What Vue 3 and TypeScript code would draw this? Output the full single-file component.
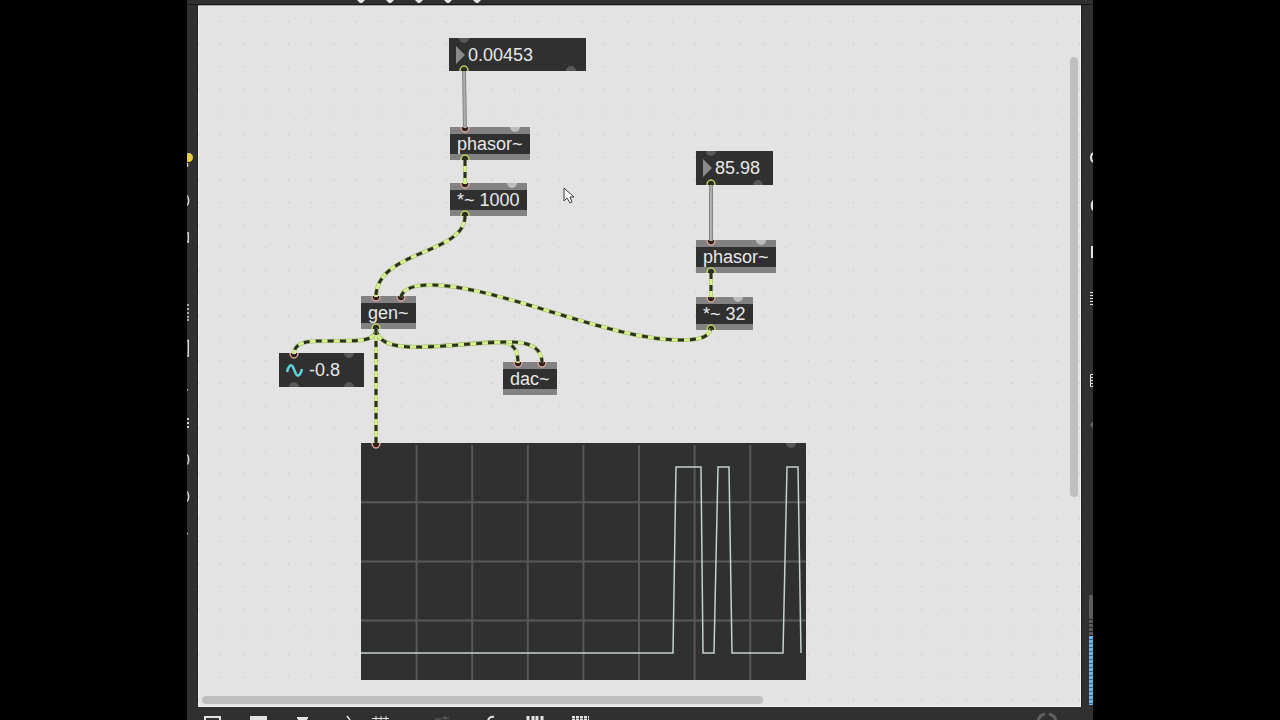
<script setup lang="ts">
import { reactive } from 'vue'

type Kind = 'number' | 'signal' | 'object' | 'scope'

interface Port {
  at: number
  live: boolean
}

interface PatchNode {
  id: string
  kind: Kind
  text: string
  x: number
  y: number
  w: number
  h: number
  inlets: Port[]
  outlets: Port[]
}

const live = (at: number): Port => ({ at, live: true })
const idle = (at: number): Port => ({ at, live: false })

const nodes = reactive<PatchNode[]>([
  { id: 'rate', kind: 'number', text: '0.00453', x: 251, y: 33, w: 137, h: 33, inlets: [idle(15)], outlets: [live(15), idle(122)] },
  { id: 'phasor-a', kind: 'object', text: 'phasor~', x: 252, y: 122, w: 80, h: 33, inlets: [live(15), idle(65)], outlets: [live(15)] },
  { id: 'mul-a', kind: 'object', text: '*~ 1000', x: 252, y: 178, w: 77, h: 33, inlets: [live(15), idle(62)], outlets: [live(15)] },
  { id: 'freq', kind: 'number', text: '85.98', x: 498, y: 146, w: 77, h: 34, inlets: [idle(15)], outlets: [live(15), idle(62)] },
  { id: 'phasor-b', kind: 'object', text: 'phasor~', x: 498, y: 235, w: 80, h: 33, inlets: [live(15), idle(65)], outlets: [live(15)] },
  { id: 'mul-b', kind: 'object', text: '*~ 32', x: 498, y: 292, w: 57, h: 33, inlets: [live(15), idle(42)], outlets: [live(15)] },
  { id: 'gen', kind: 'object', text: 'gen~', x: 163, y: 291, w: 55, h: 33, inlets: [live(15), live(40)], outlets: [live(15)] },
  { id: 'level', kind: 'signal', text: '-0.8', x: 81, y: 348, w: 85, h: 34, inlets: [live(15), idle(70)], outlets: [idle(15), idle(70)] },
  { id: 'dac', kind: 'object', text: 'dac~', x: 305, y: 357, w: 54, h: 33, inlets: [live(15), live(39)], outlets: [] },
  { id: 'scope', kind: 'scope', text: '', x: 163, y: 438, w: 445, h: 237, inlets: [live(15), idle(430)], outlets: [] },
])

const controlCords = ['M266 66 L267 123', 'M513 180 L513 236']

const signalCords = [
  'M267 155 V179',
  'M513 268 V293',
  'M267 211 C267 250 178 245 178 292',
  'M203 292 C205 283 218 280 232 280 C300 280 410 335 482 335 C500 335 510 333 513 324',
  'M178 324 C178 336 162 336 140 336 C118 336 96 334 96 349',
  'M178 324 C180 339 198 342 218 342 C250 342 280 337 300 337 C314 337 320 343 320 358',
  'M178 324 C180 339 198 342 218 342 C250 342 285 337 312 337 C332 337 344 343 344 358',
  'M178 324 V438',
]

const trace =
  '0,210 312,210 315,24 340,24 342,210 353,210 357,24 368,24 371,210 422,210 426,24 437,24 440,210'

const leftTools = ['record', 'round', 'square', '', 'list', 'panel', 'dot', 'rows', 'round', 'round', 'tick']
const rightTools = ['ring', 'disc', 'block', 'list', 'grid', 'arrow']
const bottomTools = ['window', 'solid', 'tab', 'paren', 'hash', 'dim', 'curve', 'bars', 'dots']
</script>

<template>
  <div class="screen">
    <main class="app">
      <nav class="top" aria-label="Toolbar">
        <button v-for="n in 5" :key="n" type="button" :aria-label="`Menu ${n}`">
          <svg width="29" height="5"><path d="M11 0 H19 L16 3 H14 Z" fill="#e8e8e8" /></svg>
        </button>
      </nav>

      <nav class="left" aria-label="Objects">
        <template v-for="(tool, i) in leftTools" :key="i">
          <span v-if="!tool" class="space"></span>
          <button v-else type="button" :aria-label="tool">
            <svg width="11" height="37" fill="none" stroke="#d2d2d2" stroke-width="1.5">
              <template v-if="tool === 'record'">
                <circle cx="1.5" cy="12.5" r="4.5" fill="#e6d22e" stroke="none" />
                <path d="M.5 18 V22" />
              </template>
              <path v-else-if="tool === 'round'" d="M-1 13.5 C2.5 14 2.5 23 -1 23.5" />
              <path v-else-if="tool === 'square'" d="M-1 14 H1.3 V23 H-1" />
              <path v-else-if="tool === 'panel'" d="M-1 10.5 H1.3 V26 H-1" />
              <path v-else-if="tool === 'list'" d="M0 12 H2 M0 16 H2 M0 20 H2 M0 24 H2 M0 27 H2" />
              <circle v-else-if="tool === 'dot'" cx="0" cy="23" r="1" fill="#d2d2d2" stroke="none" />
              <path v-else-if="tool === 'rows'" d="M0 15 H2 M0 19 H2 M0 23 H2" stroke-width="2" />
              <path v-else d="M0 18.5 H1" />
            </svg>
          </button>
        </template>
      </nav>

      <section class="canvas" aria-label="Patcher">
        <svg class="layer" aria-hidden="true">
          <defs>
            <pattern id="dots" x="11.4" y="5.4" width="22.6" height="22.6" patternUnits="userSpaceOnUse">
              <circle cx="11.3" cy="11.3" r=".8" fill="#c6c6c6" />
            </pattern>
          </defs>
          <rect width="100%" height="100%" fill="url(#dots)" />
        </svg>

        <div
          v-for="node in nodes"
          :key="node.id"
          class="node"
          :class="node.kind"
          :style="{ left: node.x + 'px', top: node.y + 'px', width: node.w + 'px', height: node.h + 'px' }"
        >
          <template v-if="node.kind === 'number'">
            <svg class="mark" width="9" height="18"><path d="M0 0 L9 9 L0 18 Z" fill="#8a8a8a" /></svg>
            <input v-model="node.text" type="text" :aria-label="node.id" />
          </template>
          <template v-else-if="node.kind === 'signal'">
            <svg class="mark" width="17" height="16" fill="none" stroke="#5fd3dc" stroke-width="2.5">
              <path d="M1 10 C2 5 5 1 7 5 L10 12 C12 16 15 12 16 7" />
            </svg>
            <input v-model="node.text" type="text" :aria-label="node.id" />
          </template>
          <span v-else-if="node.kind === 'object'">{{ node.text }}</span>
          <svg v-else width="445" height="237" fill="none">
            <g stroke="#585858" stroke-width="2">
              <path v-for="n in 7" :key="'v' + n" :d="`M${n * 55.6} 2 V237`" />
              <path v-for="n in 3" :key="'h' + n" :d="`M0 ${n * 59.2} H445`" />
            </g>
            <polyline :points="trace" stroke="#c4d2d0" stroke-width="1.5" />
          </svg>
        </div>

        <svg class="layer" fill="none" aria-hidden="true">
          <g v-for="node in nodes" :key="node.id" :transform="`translate(${node.x} ${node.y})`">
            <template v-for="port in node.inlets" :key="'i' + port.at">
              <path
                v-if="!port.live"
                :d="`M${port.at - 5} 0 a5 5 0 0 0 10 0 Z`"
                :fill="node.kind === 'object' ? '#bcbcbc' : '#585858'"
              />
              <path
                v-else
                :d="`M${port.at - 4} 0 a4 5 0 0 0 8 0`"
                fill="#2a2020"
                stroke="#e0a094"
                stroke-width="1.5"
              />
            </template>
            <template v-for="port in node.outlets" :key="'o' + port.at">
              <path v-if="!port.live" :d="`M${port.at - 5} ${node.h} a5 5 0 0 1 10 0 Z`" fill="#585858" />
              <path
                v-else
                :d="`M${port.at - 4} ${node.h} a4 5 0 0 1 8 0`"
                fill="#2a2c20"
                stroke="#c3d65a"
                stroke-width="1.5"
              />
            </template>
          </g>
          <g v-for="d in controlCords" :key="d">
            <path :d="d" stroke="#858585" stroke-width="4" />
            <path :d="d" stroke="#adadad" stroke-width="2" />
          </g>
          <g v-for="d in signalCords" :key="d">
            <path :d="d" stroke="#a3b565" stroke-width="4" />
            <path :d="d" stroke="#d6f28e" stroke-width="3" />
            <path :d="d" stroke="#2c2f24" stroke-width="3" stroke-dasharray="6 6" />
          </g>
          <path
            d="M366 183 V196 L369 193 L372 198 L374 197 L372 192 H376 Z"
            fill="#fff"
            stroke="#3c3c3c"
            stroke-width="1"
          />
        </svg>

        <div class="scroll vertical"><span></span></div>
        <div class="scroll horizontal"><span></span></div>
      </section>

      <nav class="right" aria-label="Panels">
        <button v-for="(tool, i) in rightTools" :key="i" type="button" :class="tool" :aria-label="tool">
          <svg width="12" height="47" fill="none" stroke="#e2e2e2" stroke-width="1.5">
            <path v-if="tool === 'ring'" d="M13 19 C9 20 9 27 13 28" stroke-width="2" />
            <path v-else-if="tool === 'disc'" d="M12 19 C9 21 9 28 12 30 Z" fill="#e2e2e2" stroke="none" />
            <rect v-else-if="tool === 'block'" x="10" y="18" width="3" height="12" fill="#e2e2e2" stroke="none" />
            <path v-else-if="tool === 'list'" d="M9 17.5 H12 M9 20.5 H12 M9 23.5 H12 M9 26.5 H12 M9 29.5 H12" stroke-width="1" />
            <g v-else-if="tool === 'grid'" stroke-width="1">
              <path d="M13 17.5 H9.5 V29.5 H13 M9.5 20.5 H13 M9.5 23.5 H13 M9.5 26.5 H13" />
            </g>
            <path v-else d="M13 16 L9 21 L13 26 Z" fill="#666" stroke="none" />
          </svg>
        </button>
        <div class="meter"><span class="idle"></span><span class="steps"></span><span class="lit"></span></div>
      </nav>

      <nav class="bottom" aria-label="Actions">
        <button v-for="tool in bottomTools" :key="tool" type="button" :aria-label="tool">
          <svg width="46" height="13" fill="none" stroke="#e2e2e2" stroke-width="2">
            <path v-if="tool === 'window'" d="M16 13 V10 H31 V13" />
            <rect v-else-if="tool === 'solid'" x="15" y="9" width="17" height="4" fill="#e2e2e2" stroke="none" />
            <path v-else-if="tool === 'tab'" d="M16 10 H27 V12 H26 V13 H17 V12 H16 Z" fill="#e2e2e2" stroke="none" />
            <path v-else-if="tool === 'paren'" d="M20 9 L23 13" stroke-width="1.5" />
            <path v-else-if="tool === 'hash'" d="M-1 11.5 H16 M3 9 V13 M8 9 V13 M13 9 V13" stroke-width="1" />
            <path v-else-if="tool === 'dim'" d="M16 12 H22 M26 9 V13 M23 11 H30" stroke="#666" stroke-width="1" />
            <path v-else-if="tool === 'curve'" d="M29 10 C26 9 24 11 23 13" />
            <path v-else-if="tool === 'bars'" d="M17 9 V13 M22 9 V13 M26 9 V13 M31 9 V13" stroke-width="3" />
            <path v-else d="M15 10 H32 M15 12.5 H32" stroke-dasharray="3 1" />
          </svg>
        </button>
        <button class="power" type="button" aria-label="Audio">
          <svg width="46" height="13" fill="none" stroke="#606060" stroke-width="3">
            <path d="M14 15 A9 9 0 0 1 21 7 M25 7 A9 9 0 0 1 32 15" />
          </svg>
        </button>
      </nav>
    </main>
  </div>
</template>

<style>
body {
  margin: 0;
  background: #000;
}
</style>

<style scoped>
.screen {
  box-sizing: border-box;
  display: grid;
  min-height: 100vh;
  padding: 0 187px;
  background: #000;
  font-family: 'Liberation Sans', Arial, sans-serif;
}

.app {
  display: grid;
  grid-template: 'top top top' 5px 'left canvas right' 1fr 'bottom bottom bottom' 13px / 11px 1fr 12px;
  min-width: 0;
  overflow: hidden;
  background: #303030;
}

button {
  display: block;
  flex: none;
  margin: 0;
  padding: 0;
  border: 0;
  background: none;
}

svg {
  display: block;
}

.top {
  grid-area: top;
  display: flex;
  padding-left: 159px;
  box-shadow: inset 0 -1px #161616;
}

.left {
  grid-area: left;
  display: flex;
  flex-direction: column;
  padding-top: 140px;
  box-shadow: inset -1px 0 #222;
}

.left .space {
  height: 37px;
}

.right {
  grid-area: right;
  display: flex;
  flex-direction: column;
  padding-top: 129px;
  box-shadow: inset 1px 0 #1c1c1c;
}

.right .grid {
  margin-top: 35px;
}

.meter {
  display: grid;
  grid-template-rows: 24px 17px 69px;
  width: 4px;
  margin: auto 0 2px auto;
}

.idle {
  background: #5c5c5c;
}

.steps {
  background: repeating-linear-gradient(#222 0 1px, #5c5c5c 1px 4px);
}

.lit {
  background: repeating-linear-gradient(#6cb6e4 0 3px, #2f6f9c 3px 4px);
}

.bottom {
  grid-area: bottom;
  display: flex;
  padding: 0 23px 0 2px;
}

.bottom svg {
  overflow: visible;
}

.power {
  margin-left: auto;
}

.canvas {
  grid-area: canvas;
  position: relative;
  overflow: hidden;
  background: #e3e3e3;
  box-shadow: inset 0 1px #a8a8a8, inset 1px 0 #f6f6f6, inset -1px -1px #f6f6f6;
}

.layer {
  position: absolute;
  inset: 0;
  width: 100%;
  height: 100%;
  pointer-events: none;
}

.node {
  box-sizing: border-box;
  position: absolute;
  display: flex;
  align-items: center;
  background: #303030;
  color: #e8e8e8;
  font-size: 18px;
  line-height: 20px;
  white-space: pre;
}

.object {
  padding-left: 7px;
  border: solid #828282;
  border-width: 7px 0 6px;
}

.number {
  gap: 3px;
  padding-left: 7px;
}

.signal {
  gap: 6px;
  padding-left: 7px;
}

.mark {
  flex: none;
}

input {
  flex: 1;
  min-width: 0;
  height: 20px;
  padding: 0;
  border: 0;
  outline: 0;
  background: none;
  color: inherit;
  font: inherit;
}

.scroll {
  position: absolute;
  display: grid;
}

.scroll span {
  border-radius: 4px;
  background: #bfbfbf;
}

.vertical {
  top: 52px;
  right: 3px;
  bottom: 4px;
  width: 8px;
  grid-template-rows: 440fr 206fr;
}

.horizontal {
  right: 4px;
  bottom: 3px;
  left: 4px;
  height: 8px;
  grid-template-columns: 561fr 314fr;
}
</style>
